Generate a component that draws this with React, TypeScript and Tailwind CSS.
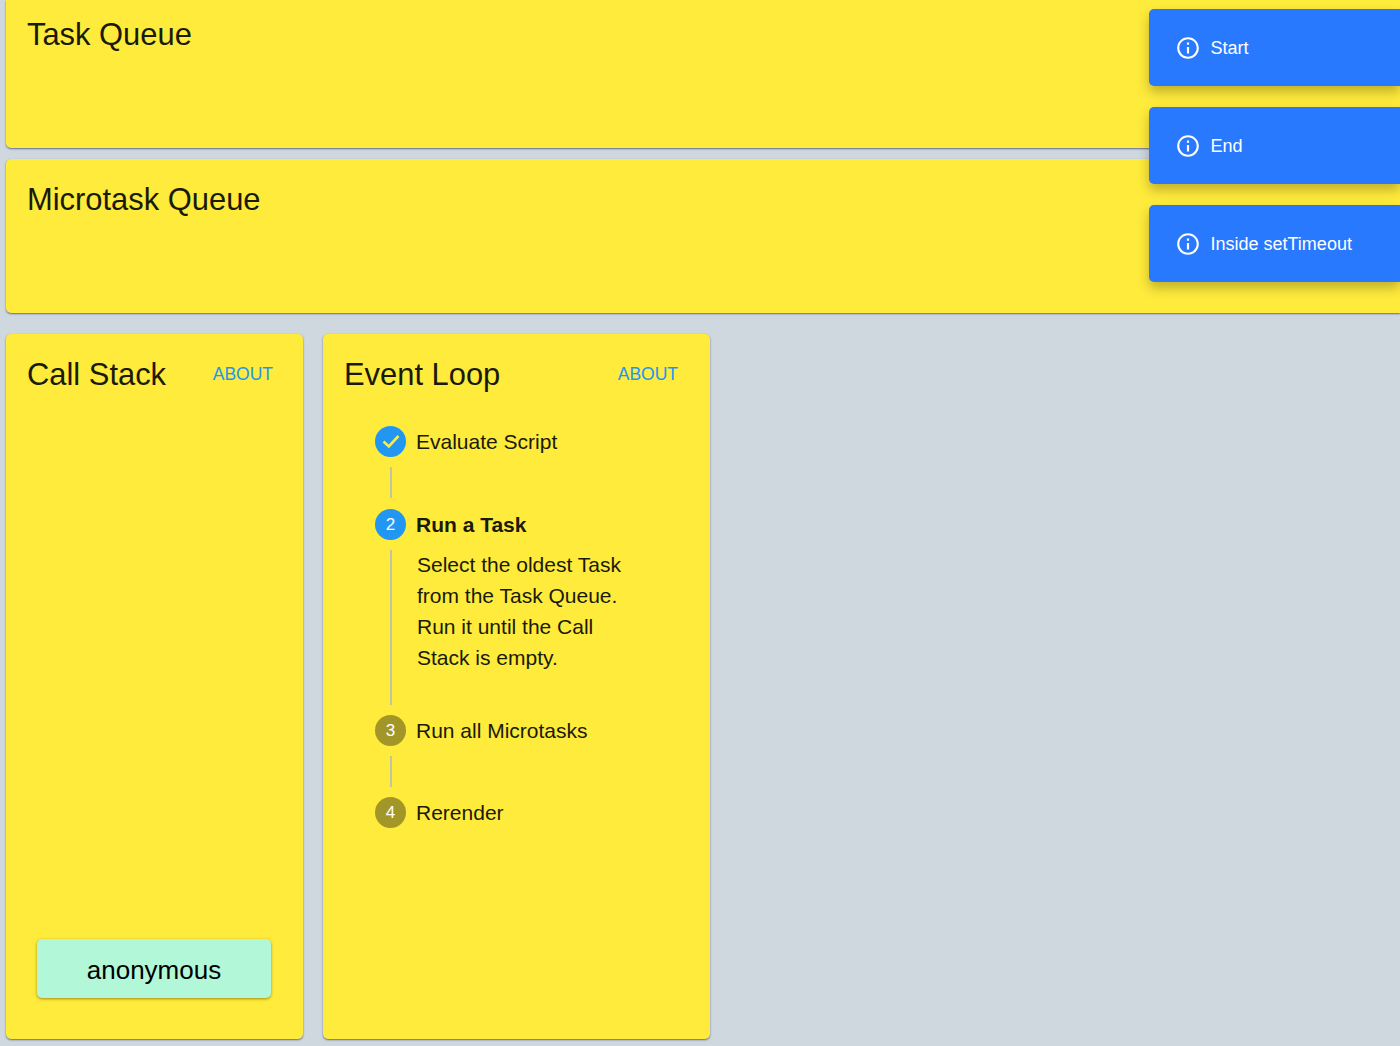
const cardShadow = "shadow-[0_1px_2px_rgba(50,60,110,0.7)]";

function InfoIcon() {
    return (
        <svg viewBox="0 0 24 24" className="h-[26px] w-[26px] shrink-0" fill="currentColor">
            <path d="M11 7h2v2h-2zm0 4h2v6h-2zm1-9C6.48 2 2 6.48 2 12s4.48 10 10 10 10-4.48 10-10S17.52 2 12 2zm0 18c-4.41 0-8-3.59-8-8s3.59-8 8-8 8 3.59 8 8-3.59 8-8 8z" />
        </svg>
    );
}

function Toast({ label }: { label: string }) {
    return (
        <div className="flex h-[77px] w-[251px] items-center gap-[10px] rounded-l-[5px] bg-[#2979ff] pl-[25.5px] text-[18px] text-white shadow-[0_6px_12px_rgba(0,0,0,0.25)]">
            <InfoIcon />
            <span className="pt-px">{label}</span>
        </div>
    );
}

function Connector({ height }: { height: string }) {
    return <div className={`ml-[15px] w-[2px] bg-[#c4c4a0] ${height}`} />;
}

function StepIcon({ n, done, active }: { n: number; done?: boolean; active?: boolean }) {
    return (
        <div className={`flex h-[31px] w-[31px] shrink-0 items-center justify-center rounded-full text-[17px] text-white ${done || active ? "bg-[#2196f3]" : "bg-[#a39628]"}`}>
            {done ? (
                <svg viewBox="0 0 24 24" className="h-[24px] w-[24px] text-[#ffeb3b]" fill="none" stroke="currentColor" strokeWidth={2.6}>
                    <path d="M4.5 11.5 9.8 16.5 19.5 6" />
                </svg>
            ) : n}
        </div>
    );
}

function Step({ n, label, done, active }: { n: number; label: string; done?: boolean; active?: boolean }) {
    return (
        <div className="flex h-[31px] items-center gap-[10px]">
            <StepIcon n={n} done={done} active={active} />
            <span className={`pt-px text-[21px] ${active ? "font-bold" : ""}`}>{label}</span>
        </div>
    );
}

function CardTitle({ title }: { title: string }) {
    return <h2 className="pt-px text-[30.9px] leading-[40px] text-[#1a1a0a]">{title}</h2>;
}

export default function App() {
    return (
        <div className="relative h-[1046px] w-[1400px] overflow-hidden bg-[#cfd8de] pl-[6px] font-['Liberation_Sans',Arial,sans-serif] text-[#1a1a0a]">
            <div className={`h-[148px] rounded-b-[5px] bg-[#ffeb3b] pl-[21px] pt-[14px] ${cardShadow}`}>
                <CardTitle title="Task Queue" />
            </div>
            <div className={`mt-[11px] h-[154px] rounded-l-[5px] bg-[#ffeb3b] pl-[21px] pt-[20px] ${cardShadow}`}>
                <CardTitle title="Microtask Queue" />
            </div>

            <div className="mt-[21px] flex gap-[20px]">
                <div className={`flex h-[705px] w-[297px] flex-col justify-between rounded-[5px] bg-[#ffeb3b] pb-[41px] pl-[21px] pr-[30px] pt-[20px] ${cardShadow}`}>
                    <div className="flex items-center justify-between">
                        <CardTitle title="Call Stack" />
                        <span className="text-[17.5px] text-[#2196f3]">ABOUT</span>
                    </div>
                    <div className="ml-[10px] flex h-[59px] w-[234px] items-center justify-center rounded-[5px] bg-[#b2f8d8] pt-[3px] text-[26px] text-black shadow-[0_1px_3px_rgba(120,100,0,0.7)]">
                        anonymous
                    </div>
                </div>

                <div className={`h-[705px] w-[387px] rounded-[5px] bg-[#ffeb3b] pl-[21px] pr-[32px] pt-[20px] ${cardShadow}`}>
                    <div className="flex items-center justify-between">
                        <CardTitle title="Event Loop" />
                        <span className="text-[17.5px] text-[#2196f3]">ABOUT</span>
                    </div>
                    <div className="ml-[31px] mt-[31px]">
                        <Step n={1} label="Evaluate Script" done />
                        <div className="pb-[11px] pt-[10px]">
                            <Connector height="h-[31px]" />
                        </div>
                        <Step n={2} label="Run a Task" active />
                        <div className="relative py-[10px]">
                            <Connector height="h-[155px]" />
                            <p className="absolute left-[42px] top-[4px] w-[240px] pt-[5px] text-[21px] leading-[31px]">
                                Select the oldest Task<br />
                                from the Task Queue.<br />
                                Run it until the Call<br />
                                Stack is empty.
                            </p>
                        </div>
                        <Step n={3} label="Run all Microtasks" />
                        <div className="py-[10px]">
                            <Connector height="h-[31px]" />
                        </div>
                        <Step n={4} label="Rerender" />
                    </div>
                </div>
            </div>

            <div className="absolute left-[1149px] top-[9px] flex flex-col gap-[21px]">
                <Toast label="Start" />
                <Toast label="End" />
                <Toast label="Inside setTimeout" />
            </div>
        </div>
    );
}
